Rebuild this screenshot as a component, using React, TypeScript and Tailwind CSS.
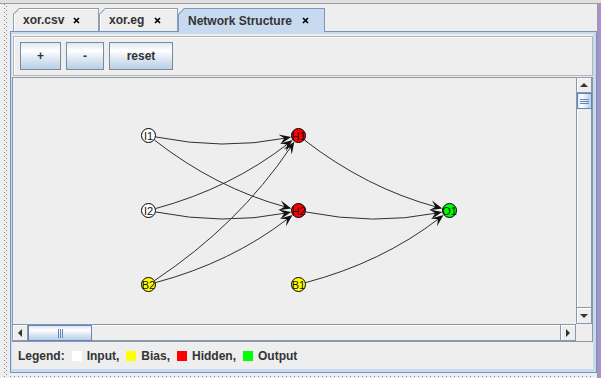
import React from "react";

type N = { x: number; y: number; fill: string };
const NODES: Record<string, N> = {
  I1: { x: 148.5, y: 135.5, fill: "#ffffff" },
  I2: { x: 148.5, y: 210.5, fill: "#ffffff" },
  B2: { x: 148.5, y: 284.5, fill: "#ffff00" },
  H1: { x: 298.5, y: 135.5, fill: "#ff0000" },
  H2: { x: 298.5, y: 210.5, fill: "#ff0000" },
  O1: { x: 449.5, y: 210.5, fill: "#00ff00" },
  B1: { x: 298.5, y: 284.5, fill: "#ffff00" },
};
const EDGES: [string, string][] = [
  ["I1", "H1"],
  ["I1", "H2"],
  ["I2", "H1"],
  ["I2", "H2"],
  ["B2", "H1"],
  ["B2", "H2"],
  ["H1", "O1"],
  ["H2", "O1"],
  ["B1", "O1"],
];
const R = 7.5;

function Edge({ a, b }: { a: N; b: N }) {
  const dx = b.x - a.x;
  const dy = b.y - a.y;
  const L = Math.hypot(dx, dy);
  const nx = -dy / L;
  const ny = dx / L;
  const k = 0.1 * L;
  const cx = (a.x + b.x) / 2 + nx * k;
  const cy = (a.y + b.y) / 2 + ny * k;
  const sx = cx - a.x;
  const sy = cy - a.y;
  const sl = Math.hypot(sx, sy);
  const S = { x: a.x + (sx / sl) * R, y: a.y + (sy / sl) * R };
  const ex = b.x - cx;
  const ey = b.y - cy;
  const el = Math.hypot(ex, ey);
  const ux = ex / el;
  const uy = ey / el;
  const px = -uy;
  const py = ux;
  const E = { x: b.x - ux * R, y: b.y - uy * R };
  const Eb = { x: E.x - ux * 6, y: E.y - uy * 6 };
  const pts = [
    [E.x, E.y],
    [E.x - ux * 12 + px * 5, E.y - uy * 12 + py * 5],
    [E.x - ux * 7, E.y - uy * 7],
    [E.x - ux * 12 - px * 5, E.y - uy * 12 - py * 5],
  ]
    .map((p) => p.join(","))
    .join(" ");
  return (
    <g>
      <path
        d={`M${S.x},${S.y} Q${cx},${cy} ${Eb.x},${Eb.y}`}
        fill="none"
        stroke="#303030"
        strokeWidth={1}
      />
      <polygon points={pts} fill="#111111" />
    </g>
  );
}

function Graph() {
  return (
    <svg width={563} height={246} viewBox="13 78 563 246" className="block">
      {EDGES.map(([a, b]) => (
        <Edge key={a + b} a={NODES[a]} b={NODES[b]} />
      ))}
      {Object.entries(NODES).map(([name, n]) => (
        <g key={name}>
          <circle cx={n.x} cy={n.y} r={7} fill={n.fill} stroke="#000000" strokeWidth={1} />
          <text
            x={n.x}
            y={n.y + 4}
            textAnchor="middle"
            fontSize={11}
            fontFamily="'Liberation Sans', Arial, sans-serif"
            fill="#111111"
          >
            {name}
          </text>
        </g>
      ))}
    </svg>
  );
}

function CloseX() {
  return (
    <svg width="7" height="7" viewBox="0 0 7 7" className="block">
      <path d="M1,1 L6,6 M6,1 L1,6" stroke="#000000" strokeWidth="1.7" />
    </svg>
  );
}

function Tab({
  label,
  width,
  selected,
  gap,
}: {
  label: string;
  width: number;
  selected?: boolean;
  gap: number;
}) {
  return (
    <div
      className={
        selected
          ? "relative z-10 -mb-[1px] h-[24px] shrink-0 bg-[#7d97c0] pt-[1px] px-[1px] [clip-path:polygon(6px_0,100%_0,100%_100%,0_100%,0_6px)]"
          : "h-[23px] shrink-0 bg-[#8e9db0] pt-[1px] px-[1px] [clip-path:polygon(6px_0,100%_0,100%_100%,0_100%,0_6px)]"
      }
      style={{ width }}
    >
      <div
        className={
          selected
            ? "h-full bg-[#c8daf0] flex items-center pl-[9px] [clip-path:polygon(5.4px_0,100%_0,100%_100%,0_100%,0_5.4px)]"
            : "h-full bg-[#eeeeee] shadow-[inset_1px_1px_0_#ffffff] flex items-center pl-[9px] [clip-path:polygon(5.4px_0,100%_0,100%_100%,0_100%,0_5.4px)]"
        }
      >
        <span className="text-[12px] font-bold text-[#333333] leading-none">{label}</span>
        <span style={{ marginLeft: gap }}>
          <CloseX />
        </span>
      </div>
    </div>
  );
}

function Btn({ w, children }: { w: number; children: React.ReactNode }) {
  return (
    <div
      className="h-[28px] shrink-0 border border-[#7a8a99] bg-[linear-gradient(to_bottom,#dde8f3_0%,#ffffff_30%,#dde8f3_60%,#b8cfe5_100%)] flex items-center justify-center text-[12px] font-bold text-[#333333]"
      style={{ width: w }}
    >
      {children}
    </div>
  );
}

function Tri({ dir }: { dir: "up" | "down" | "left" | "right" }) {
  const pts =
    dir === "up"
      ? "0,4 8,4 4,0"
      : dir === "down"
      ? "0,0 8,0 4,4"
      : dir === "left"
      ? "4,0 4,8 0,4"
      : "0,0 0,8 4,4";
  const w = dir === "up" || dir === "down" ? 8 : 4;
  const h = dir === "up" || dir === "down" ? 4 : 8;
  return (
    <svg width={w} height={h} viewBox={`0 0 ${w} ${h}`} className="block">
      <polygon points={pts} fill="#333333" />
    </svg>
  );
}

function VScroll() {
  return (
    <div className="flex flex-col bg-[#eeeeee] border-l border-[#8a99aa]">
      <div className="h-[15px] border-b border-r border-[#8a99aa] bg-[#eeeeee] shadow-[inset_1px_1px_0_#ffffff] flex items-center justify-center">
        <Tri dir="up" />
      </div>
      <div className="h-[16px] border border-[#6382bf] bg-[linear-gradient(to_right,#dde8f3_0%,#ffffff_30%,#dde8f3_60%,#b8cfe5_100%)] flex flex-col items-center justify-center gap-[1px]">
        <div className="w-[9px] h-[1px] bg-[#6382bf]" />
        <div className="w-[9px] h-[1px] bg-[#6382bf]" />
        <div className="w-[9px] h-[1px] bg-[#6382bf]" />
      </div>
      <div className="flex-1 border-r border-[#8a99aa] shadow-[inset_1px_0_0_#ffffff]" />
      <div className="h-[17px] border-t border-r border-b border-[#8a99aa] bg-[#eeeeee] shadow-[inset_1px_1px_0_#ffffff] flex items-center justify-center">
        <Tri dir="down" />
      </div>
    </div>
  );
}

function HScroll() {
  return (
    <div className="flex bg-[#eeeeee] border-t border-[#8a99aa]">
      <div className="w-[15px] border-r border-b border-[#8a99aa] bg-[#eeeeee] shadow-[inset_1px_1px_0_#ffffff] flex items-center justify-center">
        <Tri dir="left" />
      </div>
      <div className="w-[64px] border border-[#6382bf] bg-[linear-gradient(to_bottom,#dde8f3_0%,#ffffff_30%,#dde8f3_60%,#b8cfe5_100%)] flex items-center justify-center gap-[1px]">
        <div className="w-[1px] h-[9px] bg-[#6382bf]" />
        <div className="w-[1px] h-[9px] bg-[#6382bf]" />
        <div className="w-[1px] h-[9px] bg-[#6382bf]" />
      </div>
      <div className="flex-1 border-b border-[#8a99aa] shadow-[inset_0_1px_0_#ffffff]" />
      <div className="w-[16px] border-l border-b border-r border-[#8a99aa] bg-[#eeeeee] shadow-[inset_1px_1px_0_#ffffff] flex items-center justify-center">
        <Tri dir="right" />
      </div>
    </div>
  );
}

function LegendItem({ color, label }: { color: string; label: string }) {
  return (
    <div className="flex items-center ml-[7px]">
      <div className="w-[10px] h-[10px]" style={{ backgroundColor: color }} />
      <span className="ml-[5px]">{label}</span>
    </div>
  );
}

export default function App() {
  return (
    <div className="w-[601px] h-[378px] bg-[#eeeeee] flex flex-col overflow-hidden font-['Liberation_Sans',Arial,sans-serif] text-[#333333]">
      <div className="h-[4px] shrink-0 bg-[#e0e0e0] border-b border-[#9c9c9c]" />
      <div className="flex h-[374px] shrink-0">
        <div className="w-[10px] shrink-0 flex pl-[4px] gap-[1px]">
          <div className="w-[1px] h-full bg-[repeating-linear-gradient(to_bottom,#8c8c8c_0px,#8c8c8c_1px,transparent_1px,transparent_4px)]" />
          <div className="w-[1px] h-full mt-[2px] bg-[repeating-linear-gradient(to_bottom,#8c8c8c_0px,#8c8c8c_1px,transparent_1px,transparent_4px)]" />
        </div>
        <div className="w-[587px] shrink-0 flex flex-col">
          <div className="h-[4px] shrink-0" />
          <div className="h-[23px] shrink-0 flex items-end pl-[3px]">
            <Tab label="xor.csv" width={86} gap={9} />
            <Tab label="xor.eg" width={79} gap={10} />
            <Tab label="Network Structure" width={147} gap={10} selected />
          </div>
          <div className="h-[342px] shrink-0 border border-[#7393c5] flex">
            <div className="flex-1 flex flex-col bg-[#eeeeee] border-l-[1px] border-r-[3px] border-t-[2px] border-b-[3px] border-[#c8daf0]">
              <div className="mt-[2px] ml-[1px] h-[40px] shrink-0 border border-[#b3b3b3] shadow-[inset_1px_1px_0_#ffffff] flex items-start pt-[5px] pl-[6px] gap-[5px]">
                <Btn w={41}>+</Btn>
                <Btn w={38}>-</Btn>
                <Btn w={64}>reset</Btn>
              </div>
              <div className="mt-[1px] h-[265px] shrink-0 border border-[#8a99aa] grid grid-cols-[563px_16px] grid-rows-[246px_17px]">
                <div className="overflow-hidden bg-[#eeeeee]">
                  <Graph />
                </div>
                <VScroll />
                <HScroll />
                <div className="bg-[#eeeeee]" />
              </div>
              <div className="flex-1 flex items-center pl-[6px] text-[12px] font-bold text-[#333333]">
                <span>Legend:</span>
                <LegendItem color="#ffffff" label="Input," />
                <LegendItem color="#ffff00" label="Bias," />
                <LegendItem color="#ff0000" label="Hidden," />
                <LegendItem color="#00ff00" label="Output" />
              </div>
            </div>
          </div>
          <div className="flex-1 flex items-end pb-[1px] pr-[4px]">
            <div className="h-[1px] w-full bg-[repeating-linear-gradient(to_right,#8c8c8c_0px,#8c8c8c_1px,transparent_1px,transparent_4px)]" />
          </div>
        </div>
        <div className="w-[4px] shrink-0 flex">
          <div className="w-[1px] bg-[#9a9a9a]" />
          <div className="flex-1 bg-[#a890d3]" />
        </div>
      </div>
    </div>
  );
}
